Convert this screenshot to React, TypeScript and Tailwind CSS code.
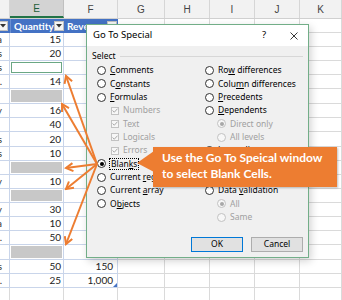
import { ReactNode } from "react";

// sheet rows below the table header: height, clipped text of col D, value of E, value of F
type SheetRow = { h: string; d: string; e: string; f?: string };

const sheetRows: SheetRow[] = [
  { h: "h-[14px]", d: "a", e: "15" },
  { h: "h-[14px]", d: "s", e: "20" },
  { h: "h-[14px]", d: "s", e: "active" },
  { h: "h-[14px]", d: ".", e: "14" },
  { h: "h-[15px]", d: "", e: "gray" },
  { h: "h-[14px]", d: "y", e: "16" },
  { h: "h-[14px]", d: "", e: "40" },
  { h: "h-[15px]", d: "s", e: "20" },
  { h: "h-[14px]", d: "s", e: "10" },
  { h: "h-[14px]", d: "", e: "gray" },
  { h: "h-[14px]", d: "y", e: "10" },
  { h: "h-[14px]", d: "", e: "gray" },
  { h: "h-[14px]", d: "y", e: "30" },
  { h: "h-[14px]", d: "a", e: "10" },
  { h: "h-[14px]", d: ".", e: "50" },
  { h: "h-[15px]", d: "", e: "gray" },
  { h: "h-[14px]", d: "s", e: "50", f: "150" },
  { h: "h-[14px]", d: ".", e: "25", f: "1,000" },
];

const letters = ["E", "F", "G", "H", "I", "J", "K"];
const widths = ["w-[54px]", "w-[54px]", "w-[47px]", "w-[45px]", "w-[45px]", "w-[45px]", "flex-1"];

function Dropdown() {
  return (
    <div className="w-[10px] h-[10px] shrink-0 bg-[#f4f4f4] border border-[#bfbfbf] flex items-center justify-center">
      <svg width="6" height="4" viewBox="0 0 6 4">
        <path d="M0 0 L6 0 L3 3.5 Z" fill="#333" />
      </svg>
    </div>
  );
}

function EmptyCells({ h }: { h: string }) {
  return (
    <>
      {widths.slice(2).map((w, i) => (
        <div key={i} className={`${w} ${h} border-r border-b border-[#dadada]`} />
      ))}
    </>
  );
}

function Radio({ on, dim }: { on?: boolean; dim?: boolean }) {
  return (
    <div
      className={`w-[9px] h-[9px] rounded-full border flex items-center justify-center shrink-0 ${
        dim ? "border-[#c2c2c2] bg-[#f7f7f7]" : "border-[#333] bg-white"
      }`}
    >
      {on && <div className={`w-[4px] h-[4px] rounded-full ${dim ? "bg-[#a8a8a8]" : "bg-black"}`} />}
    </div>
  );
}

function Opt({ children, on, dim, indent }: { children: ReactNode; on?: boolean; dim?: boolean; indent?: string }) {
  return (
    <div className={`h-[13.33px] flex items-center gap-[4px] ${indent ?? ""} ${dim ? "text-[#a0a0a0]" : ""}`}>
      <Radio on={on} dim={dim} />
      <span className="leading-none whitespace-nowrap">{children}</span>
    </div>
  );
}

function Check({ children }: { children: ReactNode }) {
  return (
    <div className="h-[13.33px] flex items-center gap-[4px] ml-[19px] text-[#a0a0a0]">
      <div className="w-[8px] h-[8px] border border-[#c2c2c2] bg-[#f7f7f7] flex items-center justify-center">
        <svg width="6" height="5" viewBox="0 0 6 5">
          <path d="M0.5 2.5 L2.3 4.2 L5.5 0.7" fill="none" stroke="#a8a8a8" strokeWidth="1" />
        </svg>
      </div>
      <span className="leading-none">{children}</span>
    </div>
  );
}

export default function App() {
  return (
    <div className="relative w-[342px] h-[300px] overflow-hidden bg-white font-['Lato',sans-serif] text-[10px] text-[#222]">
      {/* column headers */}
      <div className="flex h-[19px] bg-[#f2f2f2] border-b border-[#d0d0d0]">
        <div className="w-[10px] border-r border-[#d6d6d6]" />
        {letters.map((l, i) => (
          <div
            key={l}
            className={`${widths[i]} flex items-center justify-center border-r ${
              l === "E" ? "bg-[#d3d3d3] border-[#c0c0c0] border-b-2 border-b-[#217346] text-[#1e5e39]" : "border-[#d6d6d6] text-[#444]"
            } font-['Liberation_Sans',sans-serif] text-[10px]`}
          >
            {l}
          </div>
        ))}
      </div>

      {/* table header row */}
      <div className="flex h-[14px]">
        <div className="w-[10px] bg-[#4472c4] flex items-center justify-end pr-[2px] overflow-hidden">
          <Dropdown />
        </div>
        <div className="w-[54px] bg-[#4472c4] flex items-center pl-[3px] pr-[1px] text-white font-bold border-l border-[#6a8fd0]">
          <span>Quantity</span>
          <div className="ml-auto">
            <Dropdown />
          </div>
        </div>
        <div className="w-[54px] bg-[#4472c4] flex items-center pl-[3px] pr-[1px] text-white font-bold">
          <span>Revenue</span>
          <div className="ml-auto">
            <Dropdown />
          </div>
        </div>
        <EmptyCells h="h-[14px]" />
      </div>

      {/* table body */}
      {sheetRows.map((r, i) => (
        <div key={i} className={`flex ${r.h}`}>
          <div className="w-[10px] border-r border-b border-[#c9d5ea] overflow-hidden flex items-center justify-end pr-[7px] text-[#333]">
            {r.d}
          </div>
          <div className="w-[54px] border-r border-b border-[#c9d5ea] flex items-center justify-end">
            {r.e === "gray" ? (
              <div className="w-full h-full p-[1px]">
                <div className="w-full h-full bg-[#c8c8c8]" />
              </div>
            ) : r.e === "active" ? (
              <div className="w-full h-full p-[1px]">
                <div className="w-full h-full border border-[#6aa784] bg-white" />
              </div>
            ) : (
              <span className="pr-[2px]">{r.e}</span>
            )}
          </div>
          <div className="relative w-[54px] border-r border-b border-[#c9d5ea] flex items-center justify-end pr-[4px]">
            {r.f}
            {r.f === "1,000" && (
              <div className="absolute right-0 bottom-0 w-0 h-0 border-l-[4px] border-l-transparent border-b-[4px] border-b-[#4472c4]" />
            )}
          </div>
          <EmptyCells h={r.h} />
        </div>
      ))}
      <div className="flex h-[14px]">
        <div className="w-[10px] border-r border-b border-[#dadada]" />
        <div className="w-[54px] border-r border-b border-[#dadada]" />
        <div className="w-[54px] border-r border-b border-[#dadada]" />
        <EmptyCells h="h-[14px]" />
      </div>

      {/* Go To Special dialog */}
      <div className="absolute left-[86px] top-[24px] w-[223px] h-[234px] border border-[#72ae88] bg-[#f0f0f0] shadow-[2px_3px_8px_rgba(0,0,0,0.18)] flex flex-col font-['Noto_Sans',sans-serif] text-[8.5px] text-black">
        <div className="h-[21px] bg-white flex items-center pl-[6px] pr-[10px]">
          <span className="text-[9.5px]">Go To Special</span>
          <span className="ml-auto mr-[24px] text-[9.5px]">?</span>
          <svg width="8" height="8" viewBox="0 0 8 8">
            <path d="M0.5 0.5 L7.5 7.5 M7.5 0.5 L0.5 7.5" stroke="#222" strokeWidth="0.9" />
          </svg>
        </div>
        <div className="flex-1 flex flex-col px-[5px] pt-[4px] pb-[5px]">
          <div className="h-[12px] flex items-center gap-[4px]">
            <span className="leading-none">Select</span>
            <div className="flex-1 h-px bg-[#d7d7d7]" />
          </div>
          <div className="flex pt-[2px]">
            <div className="w-[113px] flex flex-col">
              <Opt indent="ml-[5px]"><u>C</u>omments</Opt>
              <Opt indent="ml-[5px]">C<u>o</u>nstants</Opt>
              <Opt indent="ml-[5px]"><u>F</u>ormulas</Opt>
              <Check>Numbers</Check>
              <Check>Text</Check>
              <Check>Logicals</Check>
              <Check>Errors</Check>
              <div className="h-[13.33px] flex items-center gap-[3px] ml-[5px]">
                <Radio on />
                <span className="leading-none border border-dotted border-black px-[1px] py-[1px]">
                  Blan<u>k</u>s
                </span>
              </div>
              <Opt indent="ml-[5px]">Current <u>r</u>egion</Opt>
              <Opt indent="ml-[5px]">Current <u>a</u>rray</Opt>
              <Opt indent="ml-[5px]">O<u>b</u>jects</Opt>
            </div>
            <div className="flex flex-col">
              <Opt>Ro<u>w</u> differences</Opt>
              <Opt>Colu<u>m</u>n differences</Opt>
              <Opt><u>P</u>recedents</Opt>
              <Opt><u>D</u>ependents</Opt>
              <Opt indent="ml-[12px]" on dim>Direct only</Opt>
              <Opt indent="ml-[12px]" dim>All levels</Opt>
              <Opt>La<u>s</u>t cell</Opt>
              <Opt>Visible cells onl<u>y</u></Opt>
              <Opt>Condi<u>t</u>ional formats</Opt>
              <Opt>Data <u>v</u>alidation</Opt>
              <Opt indent="ml-[12px]" on dim>All</Opt>
              <Opt indent="ml-[12px]" dim>Same</Opt>
            </div>
          </div>
          <div className="mt-auto flex justify-end gap-[8px]">
            <div className="w-[52px] h-[15px] border border-[#0078d7] bg-[#e1e1e1] flex items-center justify-center">
              OK
            </div>
            <div className="w-[52px] h-[15px] border border-[#adadad] bg-[#e1e1e1] flex items-center justify-center">
              Cancel
            </div>
          </div>
        </div>
      </div>

      {/* callout */}
      <div className="absolute left-[153px] top-[147px] w-[184px] h-[40px] bg-[#ed7d31] shadow-[1px_1px_2px_rgba(0,0,0,0.25)] px-[9px] pt-[3px] text-white font-bold text-[12px] leading-[16px] font-['Lato',sans-serif]">
        <div>Use the Go To Speical window</div>
        <div>to select Blank Cells.</div>
      </div>

      {/* arrows from the Blanks option to each blank cell */}
      <svg className="absolute left-0 top-0 pointer-events-none" width="342" height="300" viewBox="0 0 342 300">
        <defs>
          <marker id="head" markerUnits="userSpaceOnUse" markerWidth="10" markerHeight="10" refX="8" refY="5" orient="auto">
            <path d="M1 1 L8 5 L1 9" fill="none" stroke="#ed7d31" strokeWidth="2" />
          </marker>
        </defs>
        <polygon points="154,151 137,163 154,172" fill="#ed7d31" />
        <g stroke="#ed7d31" strokeWidth="2" fill="none" markerEnd="url(#head)">
          <line x1="97" y1="164" x2="66" y2="76" />
          <line x1="97" y1="164" x2="62" y2="104" />
          <line x1="97" y1="164" x2="66" y2="168" />
          <line x1="97" y1="164" x2="66" y2="189" />
          <line x1="97" y1="164" x2="66" y2="244" />
        </g>
      </svg>
    </div>
  );
}
